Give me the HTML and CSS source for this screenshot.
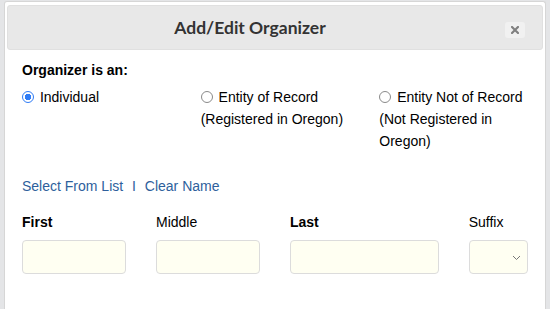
FILE: index.html
```html
<!DOCTYPE html>
<html lang="en">
<head>
  <meta charset="UTF-8" />
  <title>Add/Edit Organizer</title>
  <link rel="stylesheet" href="styles.css">
</head>
<body>
  <div class="modal">
    <div class="modal-header">
      <h3>Add/Edit Organizer</h3>
      <button class="close-btn" type="button" aria-label="Close">
        <svg width="8" height="8" viewBox="0 0 8 8"><path d="M1 1L7 7M7 1L1 7" stroke="#808080" stroke-width="2.2" stroke-linecap="square"/></svg>
      </button>
    </div>

    <div class="modal-body">
      <p class="type-title">Organizer is an:</p>
      <div class="row">
        <label class="col-4 radio-opt">
          <input type="radio" name="orgtype" checked />
          <span>Individual</span>
        </label>
        <label class="col-4 radio-opt">
          <input type="radio" name="orgtype" />
          <span>Entity of Record (Registered in Oregon)</span>
        </label>
        <label class="col-4 radio-opt">
          <input type="radio" name="orgtype" />
          <span>Entity Not of Record (Not Registered in Oregon)</span>
        </label>
      </div>

      <div class="name-links">
        <a href="#">Select From List</a>
        <span class="sep">I</span>
        <a href="#">Clear Name</a>
      </div>

      <div class="row">
        <div class="col-3 field">
          <label class="bold" for="first">First</label>
          <input type="text" id="first" />
        </div>
        <div class="col-3 field">
          <label for="middle">Middle</label>
          <input type="text" id="middle" />
        </div>
        <div class="col-4 field">
          <label class="bold" for="last">Last</label>
          <input type="text" id="last" />
        </div>
        <div class="col-2 field">
          <label for="suffix">Suffix</label>
          <div class="select-wrap">
            <select id="suffix">
              <option></option>
              <option>Jr.</option>
              <option>Sr.</option>
            </select>
            <svg class="chevron" width="9" height="6" viewBox="0 0 9 6"><path d="M1 1L4.5 4.5L8 1" fill="none" stroke="#777" stroke-width="1"/></svg>
          </div>
        </div>
      </div>
    </div>
  </div>
</body>
</html>
```

FILE: styles.css
```css
* {
  box-sizing: border-box;
  margin: 0;
  padding: 0;
}

html, body {
  width: 100%;
  height: 100%;
  overflow: hidden;
}

body {
  background: #e4e5e7;
  padding: 1px 4px 0;
  font-family: "Liberation Sans", Arial, sans-serif;
  font-size: 14px;
  color: #000;
}

.modal {
  background: #fff;
  border: 1px solid #d6d6d6;
  border-bottom: none;
  border-radius: 3px 3px 0 0;
  padding: 3px 2px 0;
  height: 308px;
}

.modal-header {
  height: 45px;
  background: #e8e8e8;
  border: 1px solid #e0e0e0;
  border-radius: 3px;
  display: flex;
  align-items: center;
  justify-content: center;
  padding-right: 50px;
  position: relative;
}

.modal-header h3 {
  font-family: Lato, "Open Sans", sans-serif;
  font-size: 17.5px;
  font-weight: 700;
  color: #333;
  margin-top: -1px;
}

/* nút đóng ở góc phải */
.close-btn {
  position: absolute;
  right: 17px;
  top: 16px;
  width: 20px;
  height: 16px;
  border: none;
  border-radius: 3px;
  background: #f1f1f1;
  display: flex;
  align-items: center;
  justify-content: center;
  cursor: pointer;
}

.modal-body {
  padding-top: 10px;
}

.row {
  display: flex;
}

.col-2 { width: 16.6667%; padding: 0 15px; }
.col-3 { width: 25%; padding: 0 15px; }
.col-4 { width: 33.3333%; padding: 0 15px; }

.type-title {
  font-weight: bold;
  line-height: 20px;
  padding: 0 15px;
  margin-bottom: 6px;
}

.radio-opt {
  line-height: 22px;
  cursor: pointer;
}

.radio-opt input {
  appearance: none;
  width: 12px;
  height: 12px;
  border: 1px solid #8a8a8a;
  border-radius: 50%;
  background: #fff;
  vertical-align: -1px;
  margin-right: 2px;
}

.radio-opt input:checked {
  border: 1.5px solid #2f7cf6;
  background: radial-gradient(circle, #2f7cf6 0 3px, #fff 3.4px);
}

.name-links {
  padding: 0 15px;
  margin-top: 24px;
  line-height: 20px;
}

.name-links a {
  color: #2e5f9c;
  text-decoration: none;
}

.name-links .sep {
  color: #2e5f9c;
  margin: 0 5px;
}

.field {
  margin-top: 16px;
}

.field label {
  display: block;
  line-height: 20px;
  margin-bottom: 8px;
}

.field label.bold {
  font-weight: bold;
}

.field input,
.field select {
  display: block;
  width: 100%;
  height: 34px;
  background: #fffff2;
  border: 1px solid #dcdcdc;
  border-radius: 4px;
  outline: none;
  font: inherit;
  padding: 0 8px;
}

.field input:focus {
  border-color: #9ab6dd;
}

.select-wrap {
  position: relative;
}

.field select {
  appearance: none;
}

.chevron {
  position: absolute;
  right: 7px;
  top: 15px;
  pointer-events: none;
}
```
